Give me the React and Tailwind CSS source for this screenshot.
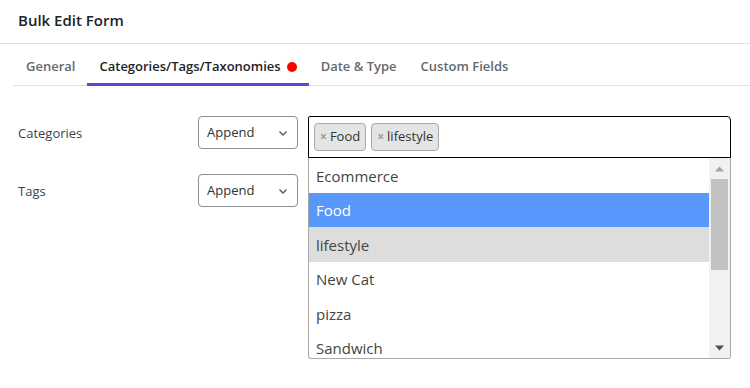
import { useState } from "react";

const options = ["Ecommerce", "Food", "lifestyle", "New Cat", "pizza", "Sandwich"];

function AppendSelect() {
  return (
    <div className="w-[100px] h-[33px] border border-[#8c8f94] rounded-[4px] flex items-center justify-between pl-[8px] pr-[9px] text-[13px] text-[#2c3338] bg-white">
      <span className="mt-[1px]">Append</span>
      <svg width="10" height="10" viewBox="0 0 10 10" fill="none">
        <path d="M1.5 3.5 L5 7 L8.5 3.5" stroke="#50575e" strokeWidth="1.4" />
      </svg>
    </div>
  );
}

function Tag({ label }) {
  return (
    <span className="h-[28px] flex items-center gap-[3px] px-[5px] bg-[#e4e4e4] border border-[#aaa] rounded-[4px] text-[13px] text-[#333]">
      <span className="text-[#999] text-[12px] font-bold">×</span>
      {label}
    </span>
  );
}

export default function App() {
  const [active] = useState(1);
  const tabs = ["General", "Categories/Tags/Taxonomies", "Date & Type", "Custom Fields"];

  return (
    <div className="w-[750px] h-[388px] bg-white overflow-hidden font-['Segoe_UI','Open_Sans',sans-serif]">
      {/* Header */}
      <header className="h-[44px] border-b border-[#e0e0e0] px-[18px] flex items-center">
        <h1 className="text-[15px] font-semibold text-[#1d2327] -mt-[2px]">Bulk Edit Form</h1>
      </header>

      {/* Tabs */}
      <nav className="ml-[13px] border-b border-[#e0e0e0] flex pl-[1px] h-[42px]">
        {tabs.map((t, i) => (
          <div
            key={t}
            className={`px-[12px] flex items-center gap-[6px] text-[13px] font-semibold border-b-[3px] -mb-[1px] pt-[7px] ${
              i === active ? "border-[#6347c8] text-[#1d2327]" : "border-transparent text-[#646970]"
            }`}
          >
            {t}
            {i === active && <span className="w-[10px] h-[10px] rounded-full bg-[#ff0000]" />}
          </div>
        ))}
      </nav>

      {/* Form */}
      <div className="pt-[30px] flex flex-col gap-[16px]">
        <div className="flex items-start">
          <div className="w-[198px] pl-[18px] h-[33px] flex items-center text-[13px] text-[#3c434a] pt-[2px]">Categories</div>
          <AppendSelect />
          <div className="relative ml-[10px] w-[423px]">
            <div className="h-[42px] border border-black rounded-tr-[4px] rounded-tl-[2px] flex items-center gap-[5px] px-[5px] bg-white">
              <Tag label="Food" />
              <Tag label="lifestyle" />
            </div>
            <div className="absolute left-0 top-[42px] w-[423px] h-[201px] border border-[#aaa] border-t-0 bg-white flex overflow-hidden rounded-b-[3px]">
              <ul className="flex-1 overflow-hidden">
                {options.map((o) => (
                  <li
                    key={o}
                    className={`h-[34.5px] flex items-center px-[7px] pt-[1px] text-[15px] ${
                      o === "Food"
                        ? "bg-[#5897fb] text-white"
                        : o === "lifestyle"
                        ? "bg-[#ddd] text-[#444]"
                        : "text-[#444]"
                    }`}
                  >
                    {o}
                  </li>
                ))}
              </ul>
              <div className="w-[21px] bg-[#f1f1f1] flex flex-col items-center">
                <div className="h-[21px] flex items-center justify-center">
                  <svg width="9" height="6" viewBox="0 0 9 6">
                    <path d="M0 5.5 L4.5 0.5 L9 5.5 Z" fill="#a3a3a3" />
                  </svg>
                </div>
                <div className="w-[17px] h-[91px] bg-[#c1c1c1]" />
                <div className="flex-1" />
                <div className="h-[21px] flex items-center justify-center">
                  <svg width="9" height="6" viewBox="0 0 9 6">
                    <path d="M0 0.5 L4.5 5.5 L9 0.5 Z" fill="#505050" />
                  </svg>
                </div>
              </div>
            </div>
          </div>
        </div>
        <div className="flex items-start">
          <div className="w-[198px] pl-[18px] h-[33px] flex items-center text-[13px] text-[#3c434a] pt-[2px]">Tags</div>
          <AppendSelect />
        </div>
      </div>
    </div>
  );
}
